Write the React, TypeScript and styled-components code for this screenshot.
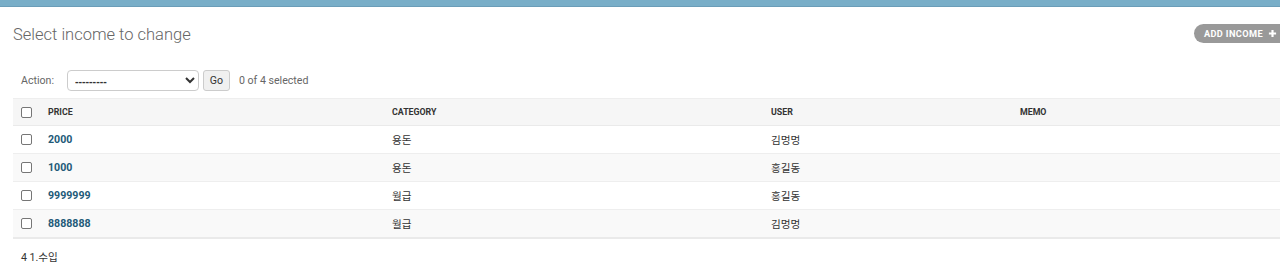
import React from "react";
import styled, { createGlobalStyle } from "styled-components";

const GlobalStyle = createGlobalStyle`
  html, body {
    margin: 0;
    padding: 0;
    background: #fff;
  }
  body {
    font-family: Roboto, "Noto Sans CJK KR", "Liberation Sans", sans-serif;
    color: #333;
    overflow: hidden;
  }
`;

const Page = styled.div`
  width: 1280px;
  overflow: hidden;
`;

const TopBar = styled.div`
  height: 6px;
  background: #79aec8;
  border-bottom: 1px solid #6b9db8;
`;

const Content = styled.div`
  padding: 17px 0 0 13px;
`;

const TitleRow = styled.div`
  display: flex;
  align-items: center;
  justify-content: space-between;
  height: 22px;
`;

const Title = styled.h1`
  margin: 0;
  font-size: 16.5px;
  font-weight: 300;
  line-height: 22px;
  color: #666;
`;

const AddButton = styled.a`
  display: flex;
  align-items: center;
  gap: 5px;
  height: 19px;
  margin-right: -9px;
  padding: 0 12px 0 10px;
  border-radius: 10px;
  background: #999;
  color: #fff;
  font-size: 9.2px;
  font-weight: 700;
  letter-spacing: 0.4px;
  text-transform: uppercase;
  text-decoration: none;
  margin-top: -4px;
`;

const Actions = styled.div`
  display: flex;
  align-items: center;
  gap: 4px;
  margin-top: 17px;
  padding: 7px 8px;
  font-size: 10.6px;
  color: #666;
`;

const Label = styled.label`
  margin-right: 9px;
`;

const Select = styled.select`
  width: 132px;
  height: 21px;
  padding: 0 3px;
  font-family: "Liberation Sans", sans-serif;
  font-size: 10.6px;
  font-weight: 700;
  color: #333;
  border: 1px solid #ccc;
  border-radius: 4px;
  background: #fff;
`;

const GoButton = styled.button`
  height: 21px;
  width: 27px;
  padding: 0;
  font-family: inherit;
  font-size: 10.6px;
  color: #333;
  background: #f0f0f0;
  border: 1px solid #ccc;
  border-radius: 3px;
`;

const Counter = styled.span`
  margin-left: 5px;
`;

const Table = styled.table`
  width: 100%;
  table-layout: fixed;
  border-collapse: collapse;
  border-top: 1px solid #eee;
  border-bottom: 2px solid #eaeaea;
`;

const Col = styled.col<{ $w: number }>`
  width: ${(p) => p.$w}px;
`;

const HeadRow = styled.tr`
  height: 27px;
  background: #f6f6f6;
`;

const Th = styled.th`
  padding: 0 8px;
  text-align: left;
  font-size: 8.8px;
  font-weight: 700;
  text-transform: uppercase;
  color: #333;
  border-bottom: 1px solid #eaeaea;
`;

const Row = styled.tr<{ $alt: boolean }>`
  height: 28px;
  background: ${(p) => (p.$alt ? "#f9f9f9" : "#fff")};
`;

const Td = styled.td`
  padding: 0 8px;
  font-size: 10.6px;
  color: #333;
  border-bottom: 1px solid #eee;
`;

const CheckCell = styled.td`
  padding: 0 0 0 8px;
  border-bottom: 1px solid #eee;
`;

const CheckHead = styled.th`
  padding: 0 0 0 8px;
  text-align: left;
  border-bottom: 1px solid #eaeaea;
`;

const Check = styled.input.attrs({ type: "checkbox" })`
  appearance: none;
  display: block;
  margin: 0;
  width: 11px;
  height: 11px;
  border: 1px solid #767676;
  border-radius: 2px;
  background: #fff;
`;

const PriceLink = styled.a`
  font-weight: 700;
  color: #225a78;
  text-decoration: none;
`;

const Paginator = styled.p`
  margin: 0;
  padding: 10px 8px;
  font-size: 10.6px;
  color: #333;
`;

const rows = [
  { price: "2000", category: "용돈", user: "김멍멍" },
  { price: "1000", category: "용돈", user: "홍길동" },
  { price: "9999999", category: "월급", user: "홍길동" },
  { price: "8888888", category: "월급", user: "김멍멍" },
];

function Plus() {
  return (
    <svg width="9" height="9" viewBox="0 0 10 10">
      <path d="M5 1v8M1 5h8" stroke="#fff" strokeWidth="2.4" />
    </svg>
  );
}

export default function App() {
  return (
    <Page>
      <GlobalStyle />
      <TopBar />
      <Content>
        <TitleRow>
          <Title>Select income to change</Title>
          <AddButton href="#">
            Add income <Plus />
          </AddButton>
        </TitleRow>

        <Actions>
          <Label>Action:</Label>
          <Select defaultValue="">
            <option value="">---------</option>
            <option value="delete">Delete selected incomes</option>
          </Select>
          <GoButton>Go</GoButton>
          <Counter>0 of 4 selected</Counter>
        </Actions>

        <Table>
          <colgroup>
            <Col $w={27} />
            <Col $w={344} />
            <Col $w={379} />
            <Col $w={249} />
            <col />
          </colgroup>
          <thead>
            <HeadRow>
              <CheckHead>
                <Check />
              </CheckHead>
              <Th>Price</Th>
              <Th>Category</Th>
              <Th>User</Th>
              <Th>Memo</Th>
            </HeadRow>
          </thead>
          <tbody>
            {rows.map((r, i) => (
              <Row key={i} $alt={i % 2 === 1}>
                <CheckCell>
                  <Check />
                </CheckCell>
                <Td>
                  <PriceLink href="#">{r.price}</PriceLink>
                </Td>
                <Td>{r.category}</Td>
                <Td>{r.user}</Td>
                <Td></Td>
              </Row>
            ))}
          </tbody>
        </Table>

        <Paginator>4 1.수입</Paginator>
      </Content>
    </Page>
  );
}
